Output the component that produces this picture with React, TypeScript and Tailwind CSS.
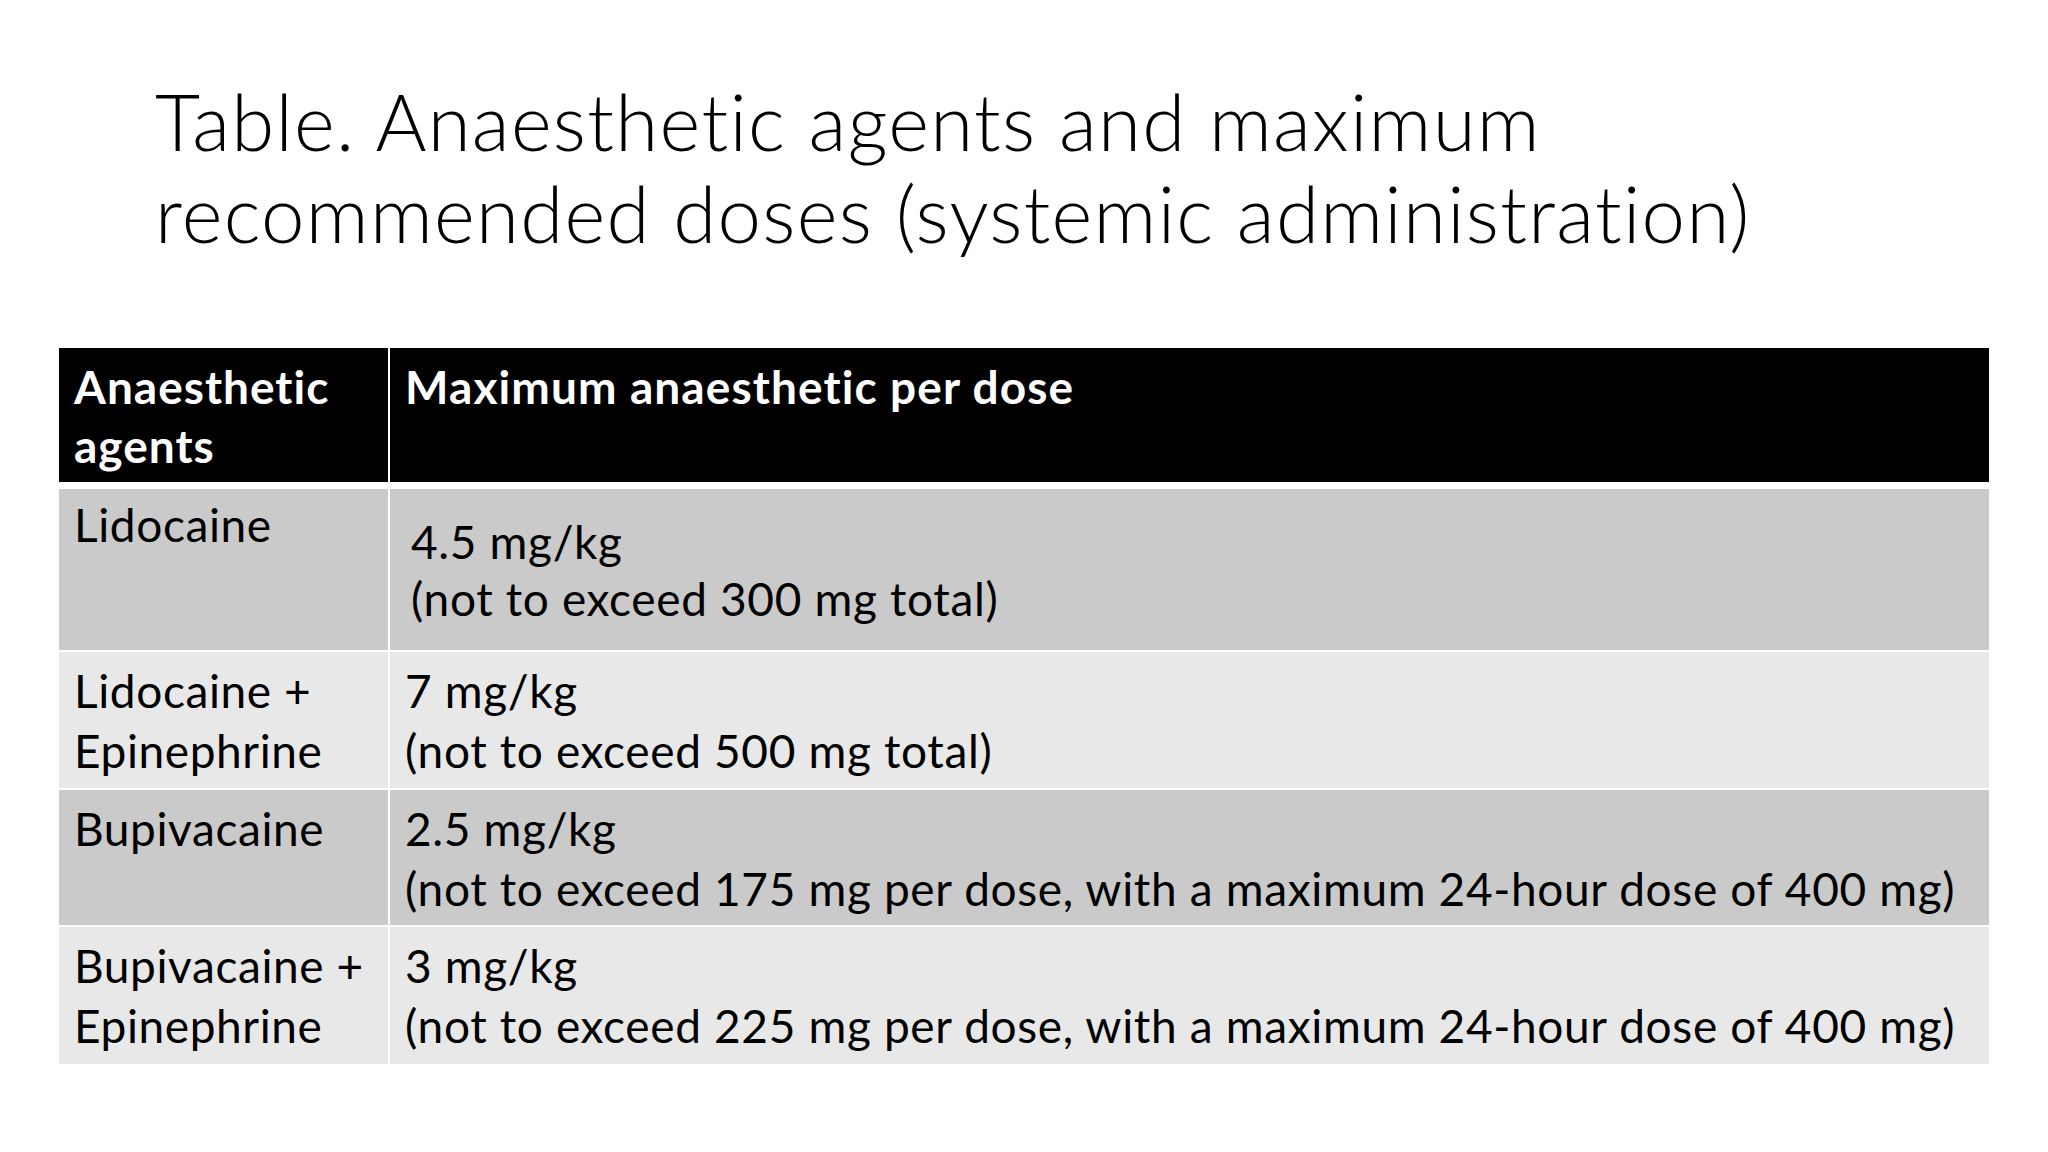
import React from 'react';

interface DoseRow {
  agent: string[];
  dose: string[];
  tone: 'dark' | 'light';
}

const rows: DoseRow[] = [
  { agent: ['Lidocaine'], dose: ['4.5 mg/kg', '(not to exceed 300 mg total)'], tone: 'dark' },
  { agent: ['Lidocaine +', 'Epinephrine'], dose: ['7 mg/kg', '(not to exceed 500 mg total)'], tone: 'light' },
  {
    agent: ['Bupivacaine'],
    dose: ['2.5 mg/kg', '(not to exceed 175 mg per dose, with a maximum 24-hour dose of 400 mg)'],
    tone: 'dark',
  },
  {
    agent: ['Bupivacaine +', 'Epinephrine'],
    dose: ['3 mg/kg', '(not to exceed 225 mg per dose, with a maximum 24-hour dose of 400 mg)'],
    tone: 'light',
  },
];

const rowHeights = ['h-[161px]', 'h-[136px]', 'h-[135px]', 'h-[137px]'];

export default function App() {
  return (
    <div className="w-[2048px] h-[1152px] bg-white text-black overflow-hidden font-['Lato',sans-serif] [font-variant-ligatures:none]">
      <div className="pt-[75px] pl-[155px]">
        <h1 className="text-[78px] leading-[92px] font-light tracking-[1.3px] whitespace-nowrap">
          Table. Anaesthetic agents and maximum
          <br />
          recommended doses (systemic administration)
        </h1>
      </div>

      <div className="mt-[89px] ml-[59px] w-[1930px] flex flex-col">
        {/* header */}
        <div className="grid grid-cols-[329px_1fr] gap-x-[2px] h-[134px]">
          <div className="bg-black text-white font-bold text-[46px] leading-[59px] tracking-[1px] pt-[9px] pl-[15px]">
            Anaesthetic
            <br />
            agents
          </div>
          <div className="bg-black text-white font-bold text-[46px] leading-[59px] tracking-[1.1px] pt-[9px] pl-[15px] whitespace-nowrap">
            Maximum anaesthetic per dose
          </div>
        </div>

        <div className="flex flex-col gap-y-[2px] mt-[7px]">
          {rows.map((row, i) => {
            const bg = row.tone === 'dark' ? 'bg-[#cacaca]' : 'bg-[#e8e8e8]';
            const first = i === 0;
            return (
              <div key={i} className={`grid grid-cols-[329px_1fr] gap-x-[2px] ${rowHeights[i]}`}>
                <div
                  className={`${bg} text-[46px] leading-[60px] tracking-[0.6px] pl-[15px] ${
                    first ? 'pt-[6px]' : 'pt-[9px]'
                  }`}
                >
                  {row.agent.map((a) => (
                    <div key={a} className="whitespace-nowrap">{a}</div>
                  ))}
                </div>
                <div
                  className={`${bg} text-[46px] tracking-[0.65px] whitespace-nowrap ${
                    first ? 'leading-[57px] pt-[24px] pl-[21px]' : 'leading-[60px] pt-[9px] pl-[15px]'
                  }`}
                >
                  {row.dose.map((d) => (
                    <div key={d}>{d}</div>
                  ))}
                </div>
              </div>
            );
          })}
        </div>
      </div>
    </div>
  );
}
